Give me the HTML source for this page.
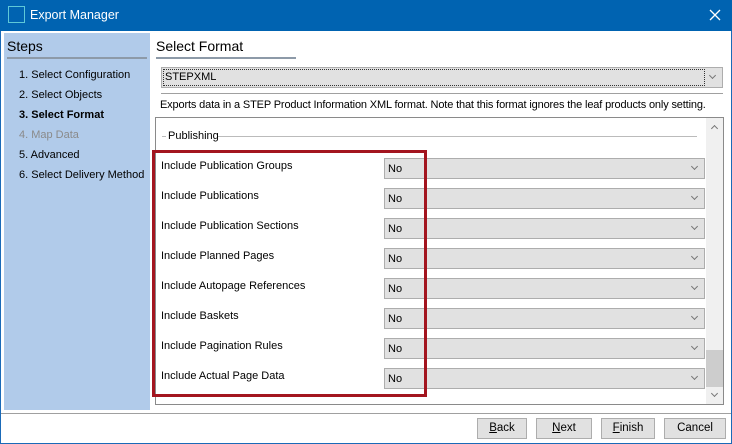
<!DOCTYPE html><html><head><style>
*{margin:0;padding:0;box-sizing:border-box}
body{width:732px;height:444px;position:relative;background:#fff;font-family:"Liberation Sans",sans-serif;font-size:11px;color:#000;overflow:hidden}
.a{position:absolute}
.t{position:absolute;white-space:nowrap;font-family:"Liberation Sans",sans-serif;font-size:11px}
.cb{position:absolute;background:#e1e1e1;border:1px solid #adadad;height:21px}
.cb span{position:absolute;left:3px;top:4px;font-family:"Liberation Sans",sans-serif;font-size:11px}
.cb i{position:absolute;right:7px;top:5px;width:5px;height:5px;border-right:1px solid #777;border-bottom:1px solid #777;transform:rotate(45deg)}
.btn{position:absolute;top:418px;height:21px;border:1px solid #adadad;background:#e1e1e1;text-align:center;font-family:"Liberation Sans",sans-serif;font-size:11.5px;line-height:19px}
.ch{position:absolute;width:5px;height:5px;border-left:1px solid #777;border-top:1px solid #777}
</style></head><body>
<div class="a" style="left:0;top:0;width:732px;height:444px;border:1px solid #1a6ab8"></div>
<div class="a" style="left:0;top:0;width:732px;height:31px;background:#0063b1"></div>
<div class="a" style="left:8px;top:6px;width:17px;height:17px;border:1px solid #5ec8d8"></div>
<div class="t" style="left:30px;top:8px;color:#fff;font-size:12.5px">Export Manager</div>
<svg class="a" style="left:709px;top:9px" width="12" height="12"><path d="M1 1L11 11M11 1L1 11" stroke="#fff" stroke-width="1.3"/></svg>
<div class="a" style="left:4px;top:33px;width:146px;height:377px;background:#b1cbea"></div>
<div class="t" style="left:7px;top:38px;font-size:14px">Steps</div>
<div class="a" style="left:7px;top:57px;width:140px;height:2px;background:#8d9aa8"></div>
<div class="t" style="left:19px;top:69px">1. Select Configuration</div>
<div class="t" style="left:19px;top:89px">2. Select Objects</div>
<div class="t" style="left:19px;top:109px;font-weight:bold">3. Select Format</div>
<div class="t" style="left:19px;top:129px;color:#8a8a8a">4. Map Data</div>
<div class="t" style="left:19px;top:149px">5. Advanced</div>
<div class="t" style="left:19px;top:169px">6. Select Delivery Method</div>
<div class="t" style="left:156px;top:38px;font-size:14px">Select Format</div>
<div class="a" style="left:156px;top:57px;width:140px;height:2px;background:#8d9aa8"></div>
<div class="cb" style="left:161px;top:67px;width:562px"><span style="outline:1px dotted #333;left:2px;right:18px;top:2px;padding-left:1px;height:15px;line-height:15px">STEPXML</span><i></i></div>
<div class="a" style="left:161px;top:93px;width:562px;height:1px;background:#a0a0a0"></div>
<div class="t" style="left:160px;top:99px;letter-spacing:-0.15px">Exports data in a STEP Product Information XML format. Note that this format ignores the leaf products only setting.</div>
<div class="a" style="left:155px;top:117px;width:569px;height:288px;border:1px solid #8a8a8a"></div>
<div class="a" style="left:706px;top:118px;width:17px;height:286px;background:#f0f0f0"></div>
<div class="a" style="left:706px;top:350px;width:17px;height:37px;background:#cdcdcd"></div>
<div class="ch" style="left:712px;top:126px;transform:rotate(45deg)"></div>
<div class="ch" style="left:712px;top:391px;transform:rotate(225deg)"></div>
<div class="a" style="left:162px;top:136px;width:4px;height:1px;background:#bbb"></div>
<div class="t" style="left:168px;top:130px">Publishing</div>
<div class="a" style="left:218px;top:136px;width:479px;height:1px;background:#bbb"></div>
<div class="t" style="left:161px;top:160px">Include Publication Groups</div>
<div class="t" style="left:161px;top:190px">Include Publications</div>
<div class="t" style="left:161px;top:220px">Include Publication Sections</div>
<div class="t" style="left:161px;top:250px">Include Planned Pages</div>
<div class="t" style="left:161px;top:280px">Include Autopage References</div>
<div class="t" style="left:161px;top:310px">Include Baskets</div>
<div class="t" style="left:161px;top:340px">Include Pagination Rules</div>
<div class="t" style="left:161px;top:370px">Include Actual Page Data</div>
<div class="cb" style="left:384px;top:158px;width:321px"><span>No</span><i></i></div>
<div class="cb" style="left:384px;top:188px;width:321px"><span>No</span><i></i></div>
<div class="cb" style="left:384px;top:218px;width:321px"><span>No</span><i></i></div>
<div class="cb" style="left:384px;top:248px;width:321px"><span>No</span><i></i></div>
<div class="cb" style="left:384px;top:278px;width:321px"><span>No</span><i></i></div>
<div class="cb" style="left:384px;top:308px;width:321px"><span>No</span><i></i></div>
<div class="cb" style="left:384px;top:338px;width:321px"><span>No</span><i></i></div>
<div class="cb" style="left:384px;top:368px;width:321px"><span>No</span><i></i></div>
<div class="a" style="left:152px;top:150px;width:275px;height:247px;border:3px solid #a3151f"></div>
<div class="a" style="left:1px;top:413px;width:730px;height:1px;background:#a0a0a0"></div>
<div class="btn" style="left:477px;width:50px"><u>B</u>ack</div>
<div class="btn" style="left:536px;width:56px"><u>N</u>ext</div>
<div class="btn" style="left:601px;width:54px"><u>F</u>inish</div>
<div class="btn" style="left:664px;width:62px">Cancel</div>
</body></html>
